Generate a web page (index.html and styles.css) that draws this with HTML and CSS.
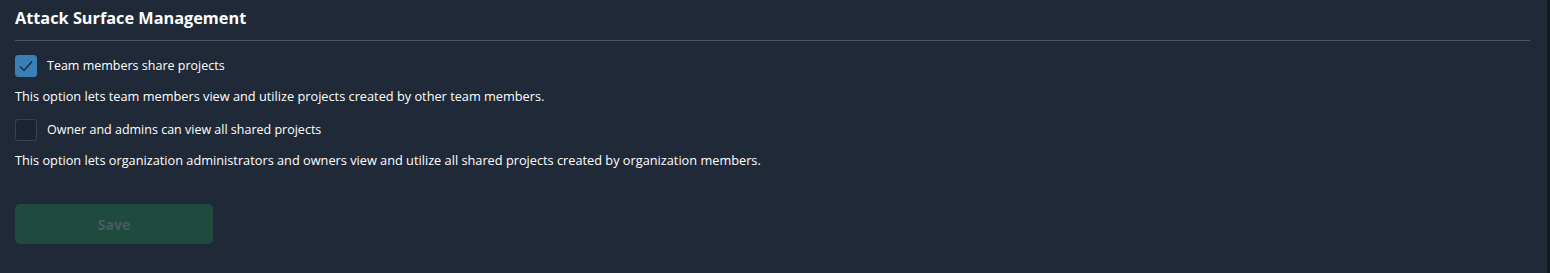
FILE: index.html
```html
<!DOCTYPE html>
<html>
<head>
<meta charset="utf-8">
<link rel="stylesheet" href="styles.css">
</head>
<body>
<div class="page">
  <div class="panel">
    <h2 class="title">Attack Surface Management</h2>
    <div class="divider"></div>
    <label class="option">
      <span class="box checked">
        <svg width="18" height="18" viewBox="0 0 18 18"><path d="M3 9.5 L7 13.5 L15 4.5" fill="none" stroke="#1e2a3a" stroke-width="1.5"/></svg>
      </span>
      <span class="label">Team members share projects</span>
    </label>
    <p class="desc">This option lets team members view and utilize projects created by other team members.</p>
    <label class="option">
      <span class="box"></span>
      <span class="label">Owner and admins can view all shared projects</span>
    </label>
    <p class="desc">This option lets organization administrators and owners view and utilize all shared projects created by organization members.</p>
    <button class="save" disabled>Save</button>
  </div>
  <div class="edge"></div>
</div>
</body>
</html>
```
FILE: styles.css
```css
html, body {
  margin: 0;
  padding: 0;
  background: #202938;
}
.page {
  display: flex;
  width: 1550px;
  height: 273px;
  font-family: "Open Sans", "Noto Sans", sans-serif;
  color: #ffffff;
}
.panel {
  flex: 1;
  padding: 0 17px 0 15px;
}
.edge {
  width: 3px;
  background: #141a24;
}
.title {
  margin: 0;
  padding-top: 7px;
  height: 26px;
  font-size: 16.3px;
  font-weight: 700;
  line-height: 22px;
}
.divider {
  height: 1px;
  background: #4b5563;
  margin-top: 7px;
}
.option {
  display: flex;
  align-items: center;
  gap: 10px;
  margin-top: 14px;
  height: 22px;
}
.option + .desc {
  margin-top: 10px;
}
.box {
  width: 20px;
  height: 20px;
  border: 1px solid #34435a;
  border-radius: 3px;
  background: #1b2433;
  display: flex;
  align-items: center;
  justify-content: center;
}
.box.checked {
  background: #3a7fb5;
  border-color: #3a7fb5;
}
.label {
  font-size: 12.5px;
  line-height: 18px;
}
.desc {
  margin: 11px 0 0;
  font-size: 12.75px;
  line-height: 18px;
}
.save {
  display: block;
  margin-top: 35px;
  width: 198px;
  height: 40px;
  border: none;
  border-radius: 5px;
  background: #1f4a3e;
  color: #4d5866;
  font-family: inherit;
  font-size: 14px;
  font-weight: 700;
}
```
